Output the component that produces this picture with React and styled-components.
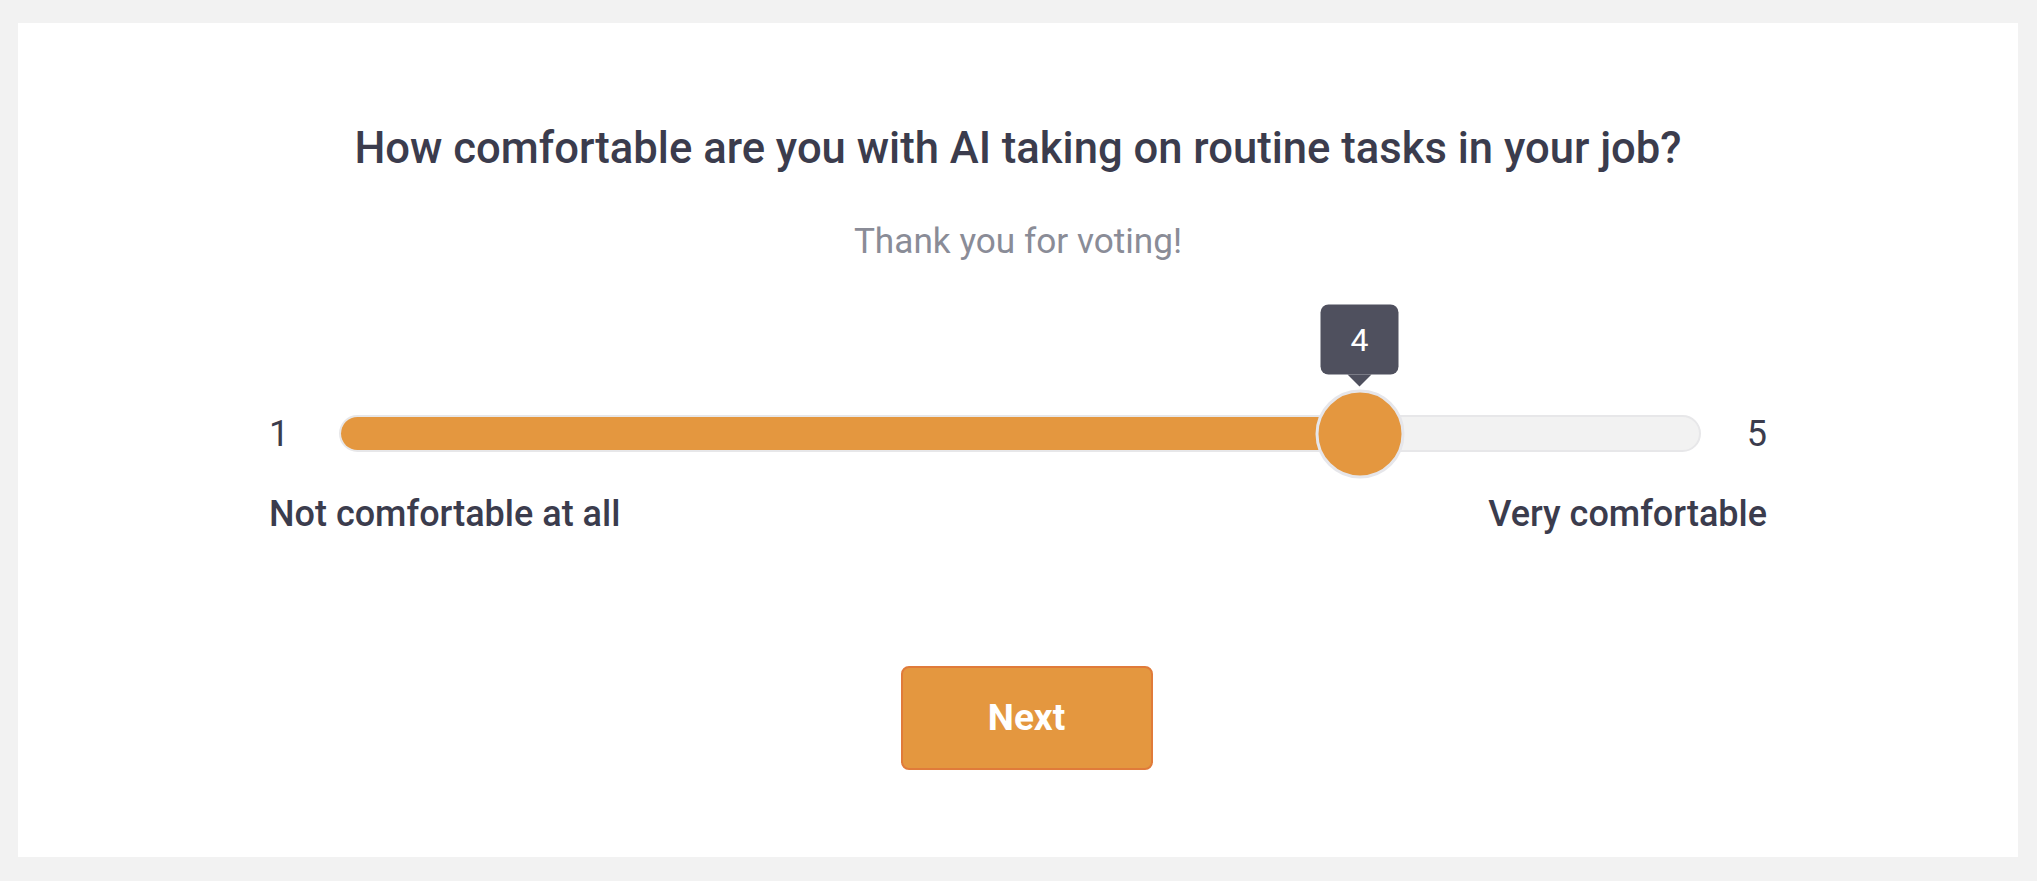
import React, { useState } from "react";
import styled, { createGlobalStyle } from "styled-components";

const GlobalStyle = createGlobalStyle`
  html, body {
    margin: 0;
    padding: 0;
    background: #f2f2f2;
    font-family: Roboto, "Noto Sans", "Liberation Sans", sans-serif;
  }
  * {
    box-sizing: border-box;
  }
`;

const Page = styled.div`
  padding: 23px 19px 24px 18px;
`;

const Card = styled.div`
  background: #ffffff;
  height: 834px;
  display: flex;
  flex-direction: column;
  align-items: center;
  padding-top: 100px;
`;

const Question = styled.h1`
  margin: 0;
  font-size: 43.6px;
  line-height: 1.2;
  font-weight: 500;
  color: #3b3c4d;
  text-align: center;
`;

const Thanks = styled.p`
  margin: 45px 0 0;
  font-size: 35.2px;
  line-height: 1.2;
  font-weight: 400;
  color: #8a8c97;
`;

const Scale = styled.div`
  width: 1498px;
  margin-top: 127px;
`;

const SliderRow = styled.div`
  display: grid;
  grid-template-columns: 70px 1fr 66px;
  align-items: center;
  height: 88px;
`;

const EndValue = styled.span`
  font-size: 36px;
  line-height: 1;
  color: #3b3c4d;
  text-align: ${(p) => (p.$right ? "right" : "left")};
`;

const Track = styled.div`
  position: relative;
  height: 37px;
  border-radius: 20px;
  background: #f2f2f2;
  border: 2px solid #e7e7e9;
`;

const Fill = styled.div`
  height: 100%;
  border-radius: 20px 0 0 20px;
  background: #e4973f;
`;

const Thumb = styled.div`
  position: absolute;
  top: 50%;
  width: 89px;
  height: 89px;
  border-radius: 50%;
  background: #e4973f;
  border: 3px solid #e6e6ea;
  transform: translate(-50%, -50%);
`;

const Bubble = styled.div`
  position: absolute;
  left: 50%;
  bottom: calc(100% + 18px);
  transform: translateX(-50%);
  width: 78px;
  height: 70px;
  border-radius: 8px;
  background: #4f505e;
  color: #ffffff;
  font-size: 32px;
  display: flex;
  align-items: center;
  justify-content: center;

  &::after {
    content: "";
    position: absolute;
    top: 100%;
    left: 50%;
    transform: translateX(-50%);
    border-left: 12px solid transparent;
    border-right: 12px solid transparent;
    border-top: 12px solid #4f505e;
  }
`;

const Captions = styled.div`
  display: flex;
  justify-content: space-between;
  margin-top: 15px;
`;

const Caption = styled.span`
  font-size: 36px;
  line-height: 1.2;
  font-weight: 500;
  color: #3b3c4d;
`;

const NextButton = styled.button`
  margin-top: 130px;
  margin-left: 17px;
  width: 252px;
  height: 104px;
  border-radius: 8px;
  border: 2px solid #e07b3a;
  background: #e4973f;
  color: #ffffff;
  font-family: inherit;
  font-size: 37px;
  font-weight: 700;
  cursor: pointer;
`;

export default function App() {
  const [value] = useState(4);
  const min = 1;
  const max = 5;
  const pct = ((value - min) / (max - min)) * 100;

  return (
    <>
      <GlobalStyle />
      <Page>
        <Card>
          <Question>How comfortable are you with AI taking on routine tasks in your job?</Question>
          <Thanks>Thank you for voting!</Thanks>
          <Scale>
            <SliderRow>
              <EndValue>{min}</EndValue>
              <Track>
                <Fill style={{ width: `${pct}%` }} />
                <Thumb style={{ left: `${pct}%` }}>
                  <Bubble>{value}</Bubble>
                </Thumb>
              </Track>
              <EndValue $right>{max}</EndValue>
            </SliderRow>
            <Captions>
              <Caption>Not comfortable at all</Caption>
              <Caption>Very comfortable</Caption>
            </Captions>
          </Scale>
          <NextButton>Next</NextButton>
        </Card>
      </Page>
    </>
  );
}
